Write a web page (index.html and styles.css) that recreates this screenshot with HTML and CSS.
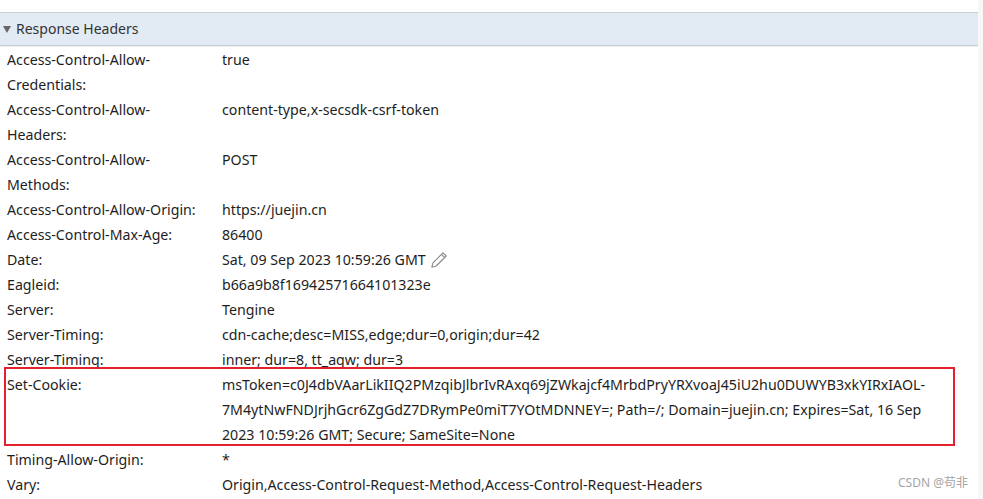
FILE: index.html
```html
<!DOCTYPE html>
<html lang="en">
<head>
    <meta charset="UTF-8">
    <meta name="viewport" content="width=device-width, initial-scale=1.0">
    <title>Response Headers</title>
    <link rel="stylesheet" href="styles.css">
</head>
<body>

    <!-- 헤더 영역 -->
    <div class="panel">
        <div class="panel_title">
            <span class="arrow"></span>
            <span>Response Headers</span>
        </div>

        <!-- 목록 영역 -->
        <div class="headers">
            <div class="row">
                <div class="key">Access-Control-Allow-<br>Credentials:</div>
                <div class="value">true</div>
            </div>
            <div class="row">
                <div class="key">Access-Control-Allow-<br>Headers:</div>
                <div class="value">content-type,x-secsdk-csrf-token</div>
            </div>
            <div class="row">
                <div class="key">Access-Control-Allow-<br>Methods:</div>
                <div class="value">POST</div>
            </div>
            <div class="row">
                <div class="key">Access-Control-Allow-Origin:</div>
                <div class="value">https://juejin.cn</div>
            </div>
            <div class="row">
                <div class="key">Access-Control-Max-Age:</div>
                <div class="value">86400</div>
            </div>
            <div class="row">
                <div class="key">Date:</div>
                <div class="value date">Sat, 09 Sep 2023 10:59:26 GMT
                    <svg class="pencil" width="18" height="18" viewBox="0 0 18 18">
                        <path d="M13 1.8 L16.2 5 L6.2 15 L1.8 16.2 L3 11.8 Z M11.4 3.4 L14.6 6.6" fill="none" stroke="#8a8a8a" stroke-width="1.1" stroke-linejoin="round"/>
                    </svg>
                </div>
            </div>
            <div class="row">
                <div class="key">Eagleid:</div>
                <div class="value">b66a9b8f16942571664101323e</div>
            </div>
            <div class="row">
                <div class="key">Server:</div>
                <div class="value">Tengine</div>
            </div>
            <div class="row">
                <div class="key">Server-Timing:</div>
                <div class="value">cdn-cache;desc=MISS,edge;dur=0,origin;dur=42</div>
            </div>
            <div class="row">
                <div class="key">Server-Timing:</div>
                <div class="value">inner; dur=8, tt_agw; dur=3</div>
            </div>
            <div class="row marked">
                <div class="key">Set-Cookie:</div>
                <div class="value">
                    <span>msToken=c0J4dbVAarLikIIQ2PMzqibJlbrIvRAxq69jZWkajcf4MrbdPryYRXvoaJ45iU2hu0DUWYB3xkYIRxIAOL-</span>
                    <span>7M4ytNwFNDJrjhGcr6ZgGdZ7DRymPe0miT7YOtMDNNEY=; Path=/; Domain=juejin.cn; Expires=Sat, 16 Sep</span>
                    <span>2023 10:59:26 GMT; Secure; SameSite=None</span>
                </div>
            </div>
            <div class="row">
                <div class="key">Timing-Allow-Origin:</div>
                <div class="value">*</div>
            </div>
            <div class="row">
                <div class="key">Vary:</div>
                <div class="value">Origin,Access-Control-Request-Method,Access-Control-Request-Headers</div>
            </div>
        </div>
    </div>

    <div class="watermark">CSDN @苟非</div>

</body>
</html>
```

FILE: styles.css
```css
html, body{
    margin: 0;
    height: 100%;
    overflow: hidden;
}
body{
    background-color: #f7f7f7;
    font-family: "Noto Sans", "Noto Sans CJK SC", sans-serif;
    font-size: 14.2px;
    color: #1e1e1e;
}
.panel{
    width: 978px;
    height: 100%;
    background-color: #fff;
    padding-top: 12px;
    box-sizing: border-box;
    /* 부모로 지정 */
    position: relative;
}

.panel_title{
    height: 32px;
    background-color: #e2eaf3;
    border-top: 1px solid #c9cfd5;
    border-bottom: 1px solid #c4cbd2;
    display: flex;
    align-items: center;
    color: #333;
    font-size: 14px;
    line-height: 30px;
}
.arrow{
    width: 0;
    height: 0;
    margin: 0 5px 0 3px;
    border-left: 4px solid transparent;
    border-right: 4px solid transparent;
    border-top: 7px solid #666;
}

.headers{
    border-top: 1px solid #f2f2f2;
}
.row{
    display: flex;
    line-height: 25px;
    padding-left: 7px;
}
.key{
    width: 215px;
    flex-shrink: 0;
}
.value{
    display: flex;
    flex-direction: column;
    white-space: nowrap;
}
.date{
    flex-direction: row;
    align-items: center;
}
.pencil{
    margin-left: 4px;
}

/* 빨간 표시 상자 */
.marked{
    position: relative;
}
.marked::after{
    content: "";
    position: absolute;
    left: 4px;
    right: 23px;
    top: -5px;
    bottom: 1px;
    border: 2px solid #e3202b;
}

.watermark{
    position: absolute;
    right: 15px;
    bottom: 8px;
    font-size: 12px;
    color: #a5a5a5;
}
```
